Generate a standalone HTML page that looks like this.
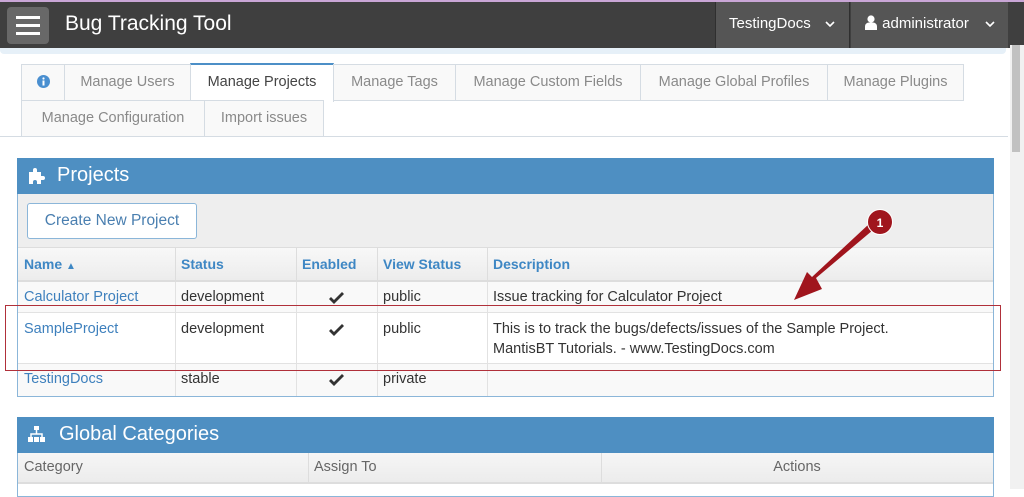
<!DOCTYPE html>
<html><head><meta charset="utf-8"><style>
*{box-sizing:border-box;margin:0;padding:0}
body{width:1024px;height:489px;overflow:hidden;background:#fff;font-family:"Liberation Sans",sans-serif;position:relative;font-size:14px;color:#333}
.a{position:absolute}
.tab{position:absolute;height:37px;border:1px solid #d5dce3;background:#f9f9f9;color:#8a8a8a;font-size:14.5px;line-height:35px;text-align:center;white-space:nowrap}
.th{position:absolute;top:0;height:100%;border-right:1px solid #ddd;padding-left:6px;line-height:32px;color:#3e87c4;font-weight:bold;font-size:14px}
.td{position:absolute;top:0;height:100%;border-right:1px solid #e2e2e2;padding-left:6px;padding-top:6px;font-size:14.5px;line-height:20px}
.lnk{color:#3e80bd}
.chk{text-align:center;padding-left:0;padding-top:10px}
</style></head><body>
<div class="a" style="left:0;top:0;width:1024px;height:48px;background:#3f3f3f;border-top:2px solid #c9a6d6"></div>
<div class="a" style="left:7px;top:7px;width:42px;height:37px;background:#686868;border-radius:4px"></div>
<div class="a" style="left:16px;top:16px;width:24px;height:3px;background:#fff"></div>
<div class="a" style="left:16px;top:24px;width:24px;height:3px;background:#fff"></div>
<div class="a" style="left:16px;top:32px;width:24px;height:3px;background:#fff"></div>
<div class="a" style="left:65px;top:12px;color:#fff;font-size:21px">Bug Tracking Tool</div>
<div class="a" style="left:715px;top:2px;width:135px;height:46px;background:#555;border-left:1px solid #2f2f2f;border-right:1px solid #2f2f2f;color:#fff;font-size:15px;line-height:44px;padding-left:13px">TestingDocs</div>
<svg class="a" style="left:825px;top:21px" width="10" height="7" viewBox="0 0 10 7"><path d="M1 1l4 4 4-4" stroke="#fff" stroke-width="1.6" fill="none"/></svg>
<div class="a" style="left:851px;top:2px;width:157px;height:46px;background:#555;color:#fff;font-size:15px;line-height:44px;padding-left:13px">
<svg width="14" height="15" viewBox="0 0 14 15" style="vertical-align:-2px"><circle cx="7" cy="4" r="3.6" fill="#fff"/><path d="M1 15v-3.5c0-2.5 2-4 4-4h4c2 0 4 1.5 4 4V15z" fill="#fff"/></svg> administrator</div>
<svg class="a" style="left:985px;top:21px" width="10" height="7" viewBox="0 0 10 7"><path d="M1 1l4 4 4-4" stroke="#fff" stroke-width="1.6" fill="none"/></svg>
<div class="a" style="left:0;top:48px;width:1006px;height:6px;background:#e6f0f8;border-radius:0 0 4px 4px"></div>
<div class="a" style="left:1010px;top:45px;width:14px;height:444px;background:#f1f1f1"></div>
<div class="a" style="left:1012px;top:45px;width:8px;height:107px;background:#c1c1c1"></div>

<div class="tab" style="left:21px;top:64px;width:44px;color:#4a8fd0">
<svg width="13" height="13" viewBox="0 0 13 13" style="vertical-align:-2px"><circle cx="6.5" cy="6.5" r="6.5" fill="#4a8fd0"/><rect x="5.5" y="5.5" width="2" height="5" fill="#fff"/><circle cx="6.5" cy="3.5" r="1.1" fill="#fff"/></svg></div>
<div class="tab" style="left:64px;top:64px;width:127px">Manage Users</div>
<div class="tab" style="left:190px;top:63px;width:144px;height:39px;background:#fff;color:#444;border-top:2px solid #4c8fc7;border-bottom:none">Manage Projects</div>
<div class="tab" style="left:333px;top:64px;width:123px">Manage Tags</div>
<div class="tab" style="left:455px;top:64px;width:186px">Manage Custom Fields</div>
<div class="tab" style="left:640px;top:64px;width:188px">Manage Global Profiles</div>
<div class="tab" style="left:827px;top:64px;width:137px">Manage Plugins</div>
<div class="tab" style="left:21px;top:100px;width:184px">Manage Configuration</div>
<div class="tab" style="left:204px;top:100px;width:120px">Import issues</div>
<div class="a" style="left:0;top:136px;width:1008px;height:1px;background:#d5dce3"></div>

<div class="a" style="left:17px;top:158px;width:977px;height:239px;border:1px solid #8bb6d9;background:#fff"></div>
<div class="a" style="left:17px;top:158px;width:977px;height:36px;background:#4e8fc2;color:#fff;font-size:20px;line-height:35px;padding-left:40px">Projects</div>
<svg class="a" style="left:28px;top:167px" width="18" height="18" viewBox="0 0 18 18"><path d="M1 5h4V3a2 2 0 014 0v2h4v4h2a2 2 0 010 4h-2v4H9v-2a2 2 0 00-4 0v2H1z" fill="#fff"/></svg>
<div class="a" style="left:18px;top:194px;width:975px;height:54px;background:#eee;border-bottom:1px solid #ddd"></div>
<div class="a" style="left:27px;top:203px;width:170px;height:36px;border:1px solid #8bb6d9;border-radius:3px;background:#fff;color:#4a7fb0;font-size:15.5px;line-height:34px;text-align:center">Create New Project</div>
<div class="a" style="left:18px;top:248px;width:975px;height:34px;background:linear-gradient(#f8f8f8,#ececec);border-bottom:2px solid #ddd">
<div class="th" style="left:0;width:158px">Name <span style="font-size:10px">&#9650;</span></div>
<div class="th" style="left:157px;width:122px">Status</div>
<div class="th" style="left:278px;width:82px">Enabled</div>
<div class="th" style="left:359px;width:111px">View Status</div>
<div class="th" style="left:469px;width:506px;border-right:none">Description</div></div>
<div class="a" style="left:18px;top:282px;width:975px;height:31px;background:#f9f9f9;border-bottom:1px solid #e2e2e2">
<div class="td lnk" style="left:0;width:158px;padding-top:5px">Calculator Project</div>
<div class="td" style="left:157px;width:122px;padding-top:5px">development</div>
<div class="td chk" style="left:278px;width:82px;padding-top:9px"><svg width="17" height="13" viewBox="0 0 17 13"><path d="M1 7l5 5L16 2 14 0 6 8 3 5z" fill="#333"/></svg></div>
<div class="td" style="left:359px;width:111px;padding-top:5px">public</div>
<div class="td" style="left:469px;width:506px;border-right:none;padding-top:5px">Issue tracking for Calculator Project</div></div>
<div class="a" style="left:18px;top:313px;width:975px;height:51px;background:#fff;border-bottom:1px solid #e2e2e2">
<div class="td lnk" style="left:0;width:158px">SampleProject</div>
<div class="td" style="left:157px;width:122px">development</div>
<div class="td chk" style="left:278px;width:82px"><svg width="17" height="13" viewBox="0 0 17 13"><path d="M1 7l5 5L16 2 14 0 6 8 3 5z" fill="#333"/></svg></div>
<div class="td" style="left:359px;width:111px">public</div>
<div class="td" style="left:469px;width:506px;border-right:none">This is to track the bugs/defects/issues of the Sample Project.<br>MantisBT Tutorials. - www.TestingDocs.com</div></div>
<div class="a" style="left:18px;top:364px;width:975px;height:32px;background:#f9f9f9">
<div class="td lnk" style="left:0;width:158px;padding-top:5px">TestingDocs</div>
<div class="td" style="left:157px;width:122px;padding-top:5px">stable</div>
<div class="td chk" style="left:278px;width:82px;padding-top:9px"><svg width="17" height="13" viewBox="0 0 17 13"><path d="M1 7l5 5L16 2 14 0 6 8 3 5z" fill="#333"/></svg></div>
<div class="td" style="left:359px;width:111px;padding-top:5px">private</div>
<div class="td" style="left:469px;width:506px;border-right:none"></div></div>
<div class="a" style="left:5px;top:305px;width:996px;height:66px;border:1.5px solid #b0303a"></div>

<svg class="a" style="left:780px;top:205px" width="120" height="110" viewBox="0 0 120 110"><path d="M89 19 L93 25 L36 73 L42 84 L14 95 L27 67 L32 72 Z" fill="#a0151d"/><circle cx="100" cy="17" r="12.5" fill="#a0151d" stroke="#fff" stroke-width="1"/><text x="100" y="22" fill="#fff" font-size="12" font-weight="bold" text-anchor="middle" font-family="Liberation Sans">1</text></svg>

<div class="a" style="left:17px;top:417px;width:977px;height:80px;border:1px solid #8bb6d9"></div>
<div class="a" style="left:17px;top:417px;width:977px;height:36px;background:#4e8fc2;color:#fff;font-size:20px;line-height:35px;padding-left:42px">Global Categories</div>
<svg class="a" style="left:28px;top:426px" width="17" height="16" viewBox="0 0 17 16"><rect x="6" y="0" width="5" height="4" fill="#fff"/><path d="M8.5 4v4M3 12V8h11v4" stroke="#fff" stroke-width="1.5" fill="none"/><rect x="0" y="11" width="5" height="5" fill="#fff"/><rect x="6" y="11" width="5" height="5" fill="#fff"/><rect x="12" y="11" width="5" height="5" fill="#fff"/></svg>
<div class="a" style="left:18px;top:453px;width:975px;height:31px;background:linear-gradient(#f6f6f6,#ececec);border-bottom:2px solid #ddd;color:#666;font-size:14.5px;line-height:29px">
<div class="a" style="left:0;width:291px;height:100%;border-right:1px solid #ddd;padding-left:6px">Category</div>
<div class="a" style="left:290px;width:294px;height:100%;border-right:1px solid #ddd;padding-left:6px">Assign To</div>
<div class="a" style="left:583px;width:392px;height:100%;text-align:center">Actions</div></div>
</body></html>
